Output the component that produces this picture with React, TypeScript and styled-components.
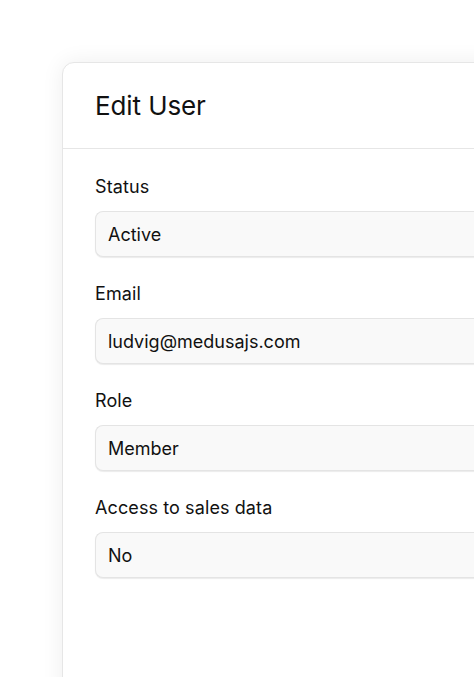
import React from 'react';
import styled, { createGlobalStyle } from 'styled-components';

const GlobalStyle = createGlobalStyle`
    html, body {
        margin: 0;
        padding: 0;
        background: #ffffff;
        overflow: hidden;
    }
    body {
        font-family: Inter, "Noto Sans", "Liberation Sans", sans-serif;
        color: #111111;
    }
`;

const Page = styled.div`
    padding: 62px 0 0 62px;
    height: 677px;
    box-sizing: border-box;
`;

const Card = styled.div`
    width: 470px;
    height: 640px;
    background: #ffffff;
    border: 1px solid #e6e6e6;
    border-radius: 12px;
    box-shadow: 0 0 22px rgba(0, 0, 0, 0.07);
    display: flex;
    flex-direction: column;
`;

const Header = styled.div`
    padding: 27px 32px 26px;
    border-bottom: 1px solid #e6e6e6;
`;

const Title = styled.h1`
    margin: 0;
    font-size: 26px;
    line-height: 32px;
    font-weight: 400;
    letter-spacing: -0.1px;
`;

const Form = styled.div`
    display: flex;
    flex-direction: column;
    gap: 25px;
    padding: 26px 0 0 32px;
`;

const Field = styled.div`
    display: flex;
    flex-direction: column;
    gap: 12px;
`;

const Label = styled.label`
    font-size: 18px;
    line-height: 24px;
    font-weight: 400;
    letter-spacing: 0.1px;
`;

const Input = styled.div`
    height: 46px;
    box-sizing: border-box;
    display: flex;
    align-items: center;
    padding: 0 12px;
    background: #f9f9f9;
    border: 1px solid #e4e4e4;
    border-right: none;
    border-radius: 8px 0 0 8px;
    box-shadow: 0 1px 1px rgba(0, 0, 0, 0.08);
    font-size: 18px;
    color: #111111;
`;

const fields = [
    { label: 'Status', value: 'Active' },
    { label: 'Email', value: 'ludvig@medusajs.com' },
    { label: 'Role', value: 'Member' },
    { label: 'Access to sales data', value: 'No' },
];

const App: React.FC = () => {
    return (
        <>
            <GlobalStyle />
            <Page>
                <Card>
                    <Header>
                        <Title>Edit User</Title>
                    </Header>
                    <Form>
                        {fields.map((f) => (
                            <Field key={f.label}>
                                <Label>{f.label}</Label>
                                <Input>{f.value}</Input>
                            </Field>
                        ))}
                    </Form>
                </Card>
            </Page>
        </>
    );
};

export default App;
